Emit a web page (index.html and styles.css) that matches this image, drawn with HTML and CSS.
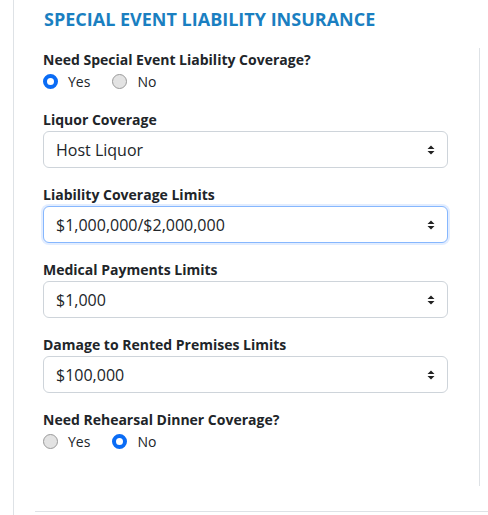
FILE: index.html
```html
<!DOCTYPE html>
<html lang="en">
<head>
<meta charset="utf-8">
<title>Special Event Liability Insurance</title>
<link rel="stylesheet" href="styles.css">
</head>
<body>
<div class="page">
  <h2 class="title">SPECIAL EVENT LIABILITY INSURANCE</h2>
  <div class="section">
    <div class="group">
      <div class="label">Need Special Event Liability Coverage?</div>
      <div class="radios">
        <label class="radio"><input type="radio" name="sel" checked><span>Yes</span></label>
        <label class="radio"><input type="radio" name="sel"><span>No</span></label>
      </div>
    </div>
    <div class="group">
      <div class="label">Liquor Coverage</div>
      <select class="select"><option>Host Liquor</option></select>
    </div>
    <div class="group">
      <div class="label">Liability Coverage Limits</div>
      <select class="select focused"><option>$1,000,000/$2,000,000</option></select>
    </div>
    <div class="group">
      <div class="label">Medical Payments Limits</div>
      <select class="select"><option>$1,000</option></select>
    </div>
    <div class="group">
      <div class="label">Damage to Rented Premises Limits</div>
      <select class="select"><option>$100,000</option></select>
    </div>
    <div class="group last">
      <div class="label">Need Rehearsal Dinner Coverage?</div>
      <div class="radios">
        <label class="radio"><input type="radio" name="reh"><span>Yes</span></label>
        <label class="radio"><input type="radio" name="reh" checked><span>No</span></label>
      </div>
    </div>
  </div>
  <div class="rule"></div>
</div>
</body>
</html>
```
FILE: styles.css
```css
html, body {
  margin: 0;
  padding: 0;
  background: #fff;
}
body {
  font-family: "Open Sans", "Liberation Sans", sans-serif;
  color: #212529;
  overflow: hidden;
}
.page {
  margin-left: 13px;
  border-left: 1px solid #dee2e6;
  height: 515px;
  box-sizing: border-box;
  padding-top: 6px;
}
.title {
  margin: 0 0 15px 30px;
  font-size: 18px;
  line-height: 27px;
  font-weight: 700;
  color: #1a7fc1;
}
.section {
  margin-right: 8px;
  border-right: 1px solid #dee2e6;
  padding: 1px 31px 33px 29px;
}
.group {
  margin-bottom: 16px;
}
.group.last {
  margin-bottom: 0;
}
.label {
  font-size: 14px;
  font-weight: 700;
  line-height: 21px;
  margin-bottom: 1px;
}
.radios {
  display: flex;
  gap: 22px;
  height: 20px;
  padding-bottom: 2px;
  align-items: center;
}
.radio {
  display: flex;
  align-items: center;
  gap: 10px;
  font-size: 14px;
}
.radio input {
  appearance: none;
  -webkit-appearance: none;
  margin: 0;
  width: 15px;
  height: 15px;
  border-radius: 50%;
  border: 1px solid #9a9a9a;
  background: #e3e3e3;
  box-sizing: border-box;
}
.radio input:checked {
  border: 4.5px solid #0a6cf5;
  background: #fff;
}
.select {
  appearance: none;
  -webkit-appearance: none;
  display: block;
  width: 100%;
  height: 37px;
  box-sizing: border-box;
  border: 1px solid #ced4da;
  border-radius: 6px;
  padding: 0 36px 0 12px;
  font-family: "Open Sans", "Liberation Sans", sans-serif;
  font-size: 16px;
  color: #212529;
  background-color: #fff;
  background-image: url("data:image/svg+xml,%3Csvg xmlns='http://www.w3.org/2000/svg' width='8' height='10' viewBox='0 0 8 10'%3E%3Cpath d='M4 0.5 L7.5 4 H0.5 Z M4 9.5 L7.5 6 H0.5 Z' fill='%23222'/%3E%3C/svg%3E");
  background-repeat: no-repeat;
  background-position: right 12px center;
  background-size: 8px 10px;
}
.select.focused {
  border-color: #86b7fe;
  box-shadow: 0 0 0 2px rgba(13, 110, 253, 0.12);
}
.rule {
  margin: 25px 0 0 21px;
  border-top: 1px solid #dee2e6;
}
```
